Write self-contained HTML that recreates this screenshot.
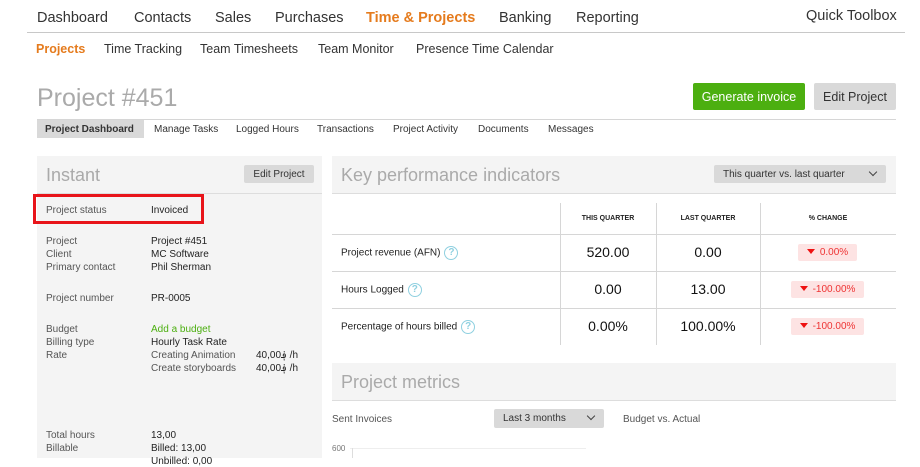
<!DOCTYPE html>
<html><head><meta charset="utf-8">
<style>
*{margin:0;padding:0;box-sizing:border-box}
body{width:920px;height:458px;overflow:hidden;background:#fff;font-family:"Liberation Sans",sans-serif;color:#333;position:relative}
.a{position:absolute;white-space:nowrap}
.nav{font-size:14.5px;color:#333;top:10px}
.sub{font-size:12.5px;color:#333;top:42px}
.tab{font-size:10px;top:124px;color:#333}
.l{font-size:10px;color:#555;left:46px}
.v{font-size:10px;color:#222;left:151px}
.btn{background:#d9d9d9;border-radius:2px;font-size:10px;color:#333;text-align:center}
.hl{position:absolute;background:#d6d6d6;height:1px}
.vl{position:absolute;background:#d6d6d6;width:1px}
.kl{font-size:10px;color:#222;left:341px}
.q{display:inline-block;width:14px;height:14px;border:1.5px solid #8fd0e0;border-radius:50%;color:#8fd0e0;font-size:10px;font-weight:bold;text-align:center;line-height:11px;vertical-align:middle;margin-left:4px}
.num{font-size:14px;color:#111;text-align:center}
.ch{background:#fde3e3;color:#e33;font-size:10px;border-radius:2px;text-align:center;height:17px;line-height:17px}
.ch:before{content:"";display:inline-block;border-left:4px solid transparent;border-right:4px solid transparent;border-top:5px solid #e11;margin-right:5px;vertical-align:1px}
.th{font-size:7px;font-weight:bold;color:#222;text-align:center;top:215px}
.chev{display:inline-block;width:6px;height:6px;border-right:1.3px solid #444;border-bottom:1.3px solid #444;transform:rotate(45deg)}
</style></head><body>
<div class="a nav" style="left:37px">Dashboard</div>
<div class="a nav" style="left:134px">Contacts</div>
<div class="a nav" style="left:215px">Sales</div>
<div class="a nav" style="left:275px">Purchases</div>
<div class="a nav" style="left:366px;color:#e57b1d;font-weight:bold">Time &amp; Projects</div>
<div class="a nav" style="left:499px">Banking</div>
<div class="a nav" style="left:576px">Reporting</div>
<div class="a nav" style="left:806px;top:8px">Quick Toolbox</div>
<div class="hl" style="left:27px;width:878px;top:32px;background:#c8c8c8"></div>

<div class="a sub" style="left:36px;color:#e57b1d;font-weight:bold">Projects</div>
<div class="a sub" style="left:104px">Time Tracking</div>
<div class="a sub" style="left:200px">Team Timesheets</div>
<div class="a sub" style="left:318px">Team Monitor</div>
<div class="a sub" style="left:416px">Presence Time Calendar</div>

<div class="a" style="left:37px;top:84px;font-size:25px;color:#aaa">Project #451</div>
<div class="a" style="left:693px;top:83px;width:112px;height:27px;background:#4caf10;border-radius:2px;color:#fff;font-size:12.5px;text-align:center;line-height:28px">Generate invoice</div>
<div class="a btn" style="left:814px;top:83px;width:82px;height:27px;line-height:28px;font-size:12.5px">Edit Project</div>
<div class="hl" style="left:37px;width:859px;top:119px"></div>

<div class="a" style="left:37px;top:120px;width:107px;height:18px;background:#d9d9d9"></div>
<div class="a tab" style="left:45px;font-weight:bold">Project Dashboard</div>
<div class="a tab" style="left:154px">Manage Tasks</div>
<div class="a tab" style="left:236px">Logged Hours</div>
<div class="a tab" style="left:317px">Transactions</div>
<div class="a tab" style="left:393px">Project Activity</div>
<div class="a tab" style="left:478px">Documents</div>
<div class="a tab" style="left:548px">Messages</div>

<!-- left panel -->
<div class="a" style="left:37px;top:156px;width:285px;height:302px;background:#f4f4f4"></div>
<div class="a" style="left:46px;top:165px;font-size:18px;color:#aaa">Instant</div>
<div class="a btn" style="left:244px;top:165px;width:70px;height:18px;line-height:19px">Edit Project</div>
<div class="hl" style="left:37px;width:285px;top:193px;background:#ddd"></div>
<div class="a" style="left:33px;top:194px;width:171px;height:30px;border:3px solid #e8141a"></div>
<div class="a l" style="top:205px">Project status</div><div class="a v" style="top:205px">Invoiced</div>
<div class="a l" style="top:236px">Project</div><div class="a v" style="top:236px">Project #451</div>
<div class="a l" style="top:249px">Client</div><div class="a v" style="top:249px">MC Software</div>
<div class="a l" style="top:262px">Primary contact</div><div class="a v" style="top:262px">Phil Sherman</div>
<div class="a l" style="top:293px">Project number</div><div class="a v" style="top:293px">PR-0005</div>
<div class="a l" style="top:324px">Budget</div><div class="a v" style="top:324px;color:#4caf10">Add a budget</div>
<div class="a l" style="top:337px">Billing type</div><div class="a v" style="top:337px">Hourly Task Rate</div>
<div class="a l" style="top:350px">Rate</div><div class="a v" style="top:350px;color:#555">Creating Animation</div><div class="a v" style="top:350px;left:256px">40,00؋ /h</div>
<div class="a v" style="top:363px;color:#555">Create storyboards</div><div class="a v" style="top:363px;left:256px">40,00؋ /h</div>
<div class="a l" style="top:430px">Total hours</div><div class="a v" style="top:430px">13,00</div>
<div class="a l" style="top:443px">Billable</div><div class="a v" style="top:443px">Billed: 13,00</div>
<div class="a v" style="top:456px">Unbilled: 0,00</div>

<!-- KPI -->
<div class="a" style="left:332px;top:156px;width:564px;height:38px;background:#f4f4f4;border-bottom:1px solid #ddd"></div>
<div class="a" style="left:341px;top:165px;font-size:18px;color:#aaa">Key performance indicators</div>
<div class="a btn" style="left:714px;top:165px;width:172px;height:18px;line-height:19px;text-align:left;padding-left:9px">This quarter vs. last quarter<span class="chev" style="position:absolute;right:10px;top:4px"></span></div>
<div class="vl" style="left:560px;top:203px;height:142px"></div>
<div class="vl" style="left:656px;top:203px;height:142px"></div>
<div class="vl" style="left:760px;top:203px;height:142px"></div>
<div class="hl" style="left:332px;width:564px;top:234px"></div>
<div class="hl" style="left:332px;width:564px;top:271px"></div>
<div class="hl" style="left:332px;width:564px;top:308px"></div>
<div class="a th" style="left:560px;width:96px">THIS QUARTER</div>
<div class="a th" style="left:656px;width:104px">LAST QUARTER</div>
<div class="a th" style="left:760px;width:136px">% CHANGE</div>
<div class="a kl" style="top:246px">Project revenue (AFN)<span class="q">?</span></div>
<div class="a kl" style="top:283px">Hours Logged<span class="q">?</span></div>
<div class="a kl" style="top:320px">Percentage of hours billed<span class="q">?</span></div>
<div class="a num" style="left:560px;width:96px;top:244px">520.00</div>
<div class="a num" style="left:656px;width:104px;top:244px">0.00</div>
<div class="a num" style="left:560px;width:96px;top:281px">0.00</div>
<div class="a num" style="left:656px;width:104px;top:281px">13.00</div>
<div class="a num" style="left:560px;width:96px;top:318px">0.00%</div>
<div class="a num" style="left:656px;width:104px;top:318px">100.00%</div>
<div class="a ch" style="left:798px;width:59px;top:244px">0.00%</div>
<div class="a ch" style="left:791px;width:73px;top:281px">-100.00%</div>
<div class="a ch" style="left:791px;width:73px;top:318px">-100.00%</div>

<!-- metrics -->
<div class="a" style="left:332px;top:363px;width:564px;height:38px;background:#f4f4f4;border-bottom:1px solid #ddd"></div>
<div class="a" style="left:341px;top:372px;font-size:18px;color:#aaa">Project metrics</div>
<div class="a" style="left:332px;top:414px;font-size:10px;color:#555">Sent Invoices</div>
<div class="a btn" style="left:494px;top:409px;width:110px;height:19px;line-height:19px;text-align:left;padding-left:9px">Last 3 months<span class="chev" style="position:absolute;right:10px;top:4px"></span></div>
<div class="a" style="left:623px;top:414px;font-size:10px;color:#555">Budget vs. Actual</div>
<div class="a" style="left:332px;top:444px;font-size:8px;color:#777">600</div>
<div class="hl" style="left:350px;width:236px;top:448px;background:#eee"></div>
<div class="vl" style="left:352px;top:448px;height:10px;background:#ddd"></div>
</body></html>
